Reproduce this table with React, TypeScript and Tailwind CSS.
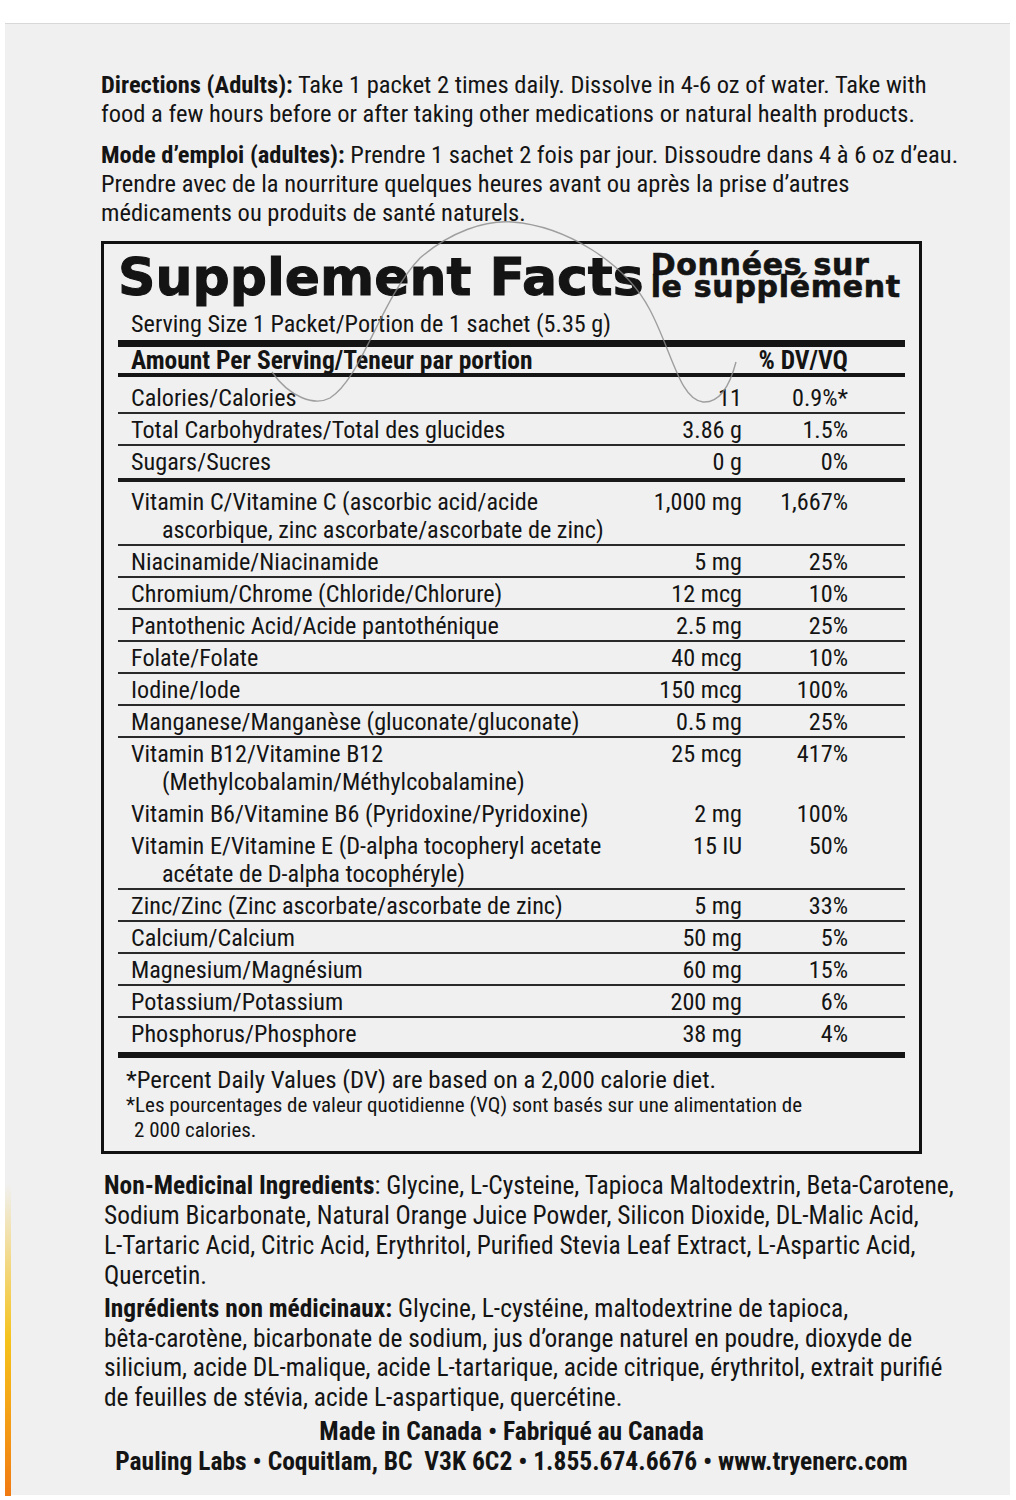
import React from 'react';

/* ── Supplement facts label (back of a carton) ── */

type Row = {
  name: string;
  name2?: string;
  amount: string;
  dv: string;
  rule?: 'thin' | 'thick' | 'none';
};

const ROWS: Row[] = [
  { name: 'Calories/Calories', amount: '11', dv: '0.9%*' },
  { name: 'Total Carbohydrates/Total des glucides', amount: '3.86 g', dv: '1.5%' },
  { name: 'Sugars/Sucres', amount: '0 g', dv: '0%', rule: 'thick' },
  {
    name: 'Vitamin C/Vitamine C (ascorbic acid/acide',
    name2: 'ascorbique, zinc ascorbate/ascorbate de zinc)',
    amount: '1,000 mg',
    dv: '1,667%',
  },
  { name: 'Niacinamide/Niacinamide', amount: '5 mg', dv: '25%' },
  { name: 'Chromium/Chrome (Chloride/Chlorure)', amount: '12 mcg', dv: '10%' },
  { name: 'Pantothenic Acid/Acide pantothénique', amount: '2.5 mg', dv: '25%' },
  { name: 'Folate/Folate', amount: '40 mcg', dv: '10%' },
  { name: 'Iodine/Iode', amount: '150 mcg', dv: '100%' },
  { name: 'Manganese/Manganèse (gluconate/gluconate)', amount: '0.5 mg', dv: '25%' },
  {
    name: 'Vitamin B12/Vitamine B12',
    name2: '(Methylcobalamin/Méthylcobalamine)',
    amount: '25 mcg',
    dv: '417%',
    rule: 'none',
  },
  { name: 'Vitamin B6/Vitamine B6 (Pyridoxine/Pyridoxine)', amount: '2 mg', dv: '100%', rule: 'none' },
  {
    name: 'Vitamin E/Vitamine E (D-alpha tocopheryl acetate',
    name2: 'acétate de D-alpha tocophéryle)',
    amount: '15 IU',
    dv: '50%',
  },
  { name: 'Zinc/Zinc (Zinc ascorbate/ascorbate de zinc)', amount: '5 mg', dv: '33%' },
  { name: 'Calcium/Calcium', amount: '50 mg', dv: '5%' },
  { name: 'Magnesium/Magnésium', amount: '60 mg', dv: '15%' },
  { name: 'Potassium/Potassium', amount: '200 mg', dv: '6%' },
  { name: 'Phosphorus/Phosphore', amount: '38 mg', dv: '4%', rule: 'none' },
];

// condensed Roboto stands in for Helvetica Condensed
const cond = "font-['Roboto',sans-serif] [font-stretch:75%]";
const black = "font-['DejaVu_Sans',sans-serif] [font-stretch:normal] font-bold";

function FactRow({ row, first, afterThick }: { row: Row; first: boolean; afterThick: boolean }) {
  const rule =
    row.rule === 'thick'
      ? 'border-b-4 border-[#1a1a1a] pb-[2px]'
      : row.rule === 'none'
        ? 'pb-[2px]'
        : 'border-b-2 border-[#2a2a2a]';
  const top = first ? 'pt-[7px]' : afterThick ? 'pt-[6px]' : 'pt-[2px]';
  return (
    <div className={`flex pl-[13px] pr-[57px] leading-[28px] ${top} ${rule}`}>
      <div className="flex-1 whitespace-nowrap">
        <div>{row.name}</div>
        {row.name2 && <div className="pl-[31px]">{row.name2}</div>}
      </div>
      <div className="w-[130px] text-right whitespace-nowrap">{row.amount}</div>
      <div className="w-[106px] text-right whitespace-nowrap">{row.dv}</div>
    </div>
  );
}

export default function App() {
  return (
    <div className={`relative w-[1016px] h-[1500px] overflow-hidden bg-white text-[#141414] ${cond}`}>
      <div className="relative mt-[23px] ml-[5px] mr-[6px] h-[1472px] bg-[#f0f0f0] border-t border-[#d8d8d8] pl-[96px] pr-[10px] pt-[46px]">
        {/* ── Directions ── */}
        <div className="text-[24.5px] leading-[29px] whitespace-nowrap">
          <p>
            <b>Directions (Adults):</b> Take 1 packet 2 times daily. Dissolve in 4-6 oz of water. Take with
            <br />
            food a few hours before or after taking other medications or natural health products.
          </p>
          <p className="mt-[12px]">
            <b>Mode d’emploi (adultes):</b> Prendre 1 sachet 2 fois par jour. Dissoudre dans 4 à 6 oz d’eau.
            <br />
            Prendre avec de la nourriture quelques heures avant ou après la prise d’autres
            <br />
            médicaments ou produits de santé naturels.
          </p>
        </div>

        {/* ── Facts panel ── */}
        <div className="mt-[14px] w-[821px] border-[3px] border-[#111] px-[14px] pb-[8px] text-[24.2px]">
          <div className="flex items-start pt-[8px] whitespace-nowrap">
            <h1 className={`${black} text-[52px] leading-[50px] [-webkit-text-stroke:1px_#111]`}>
              Supplement Facts
            </h1>
            <div className={`${black} ml-[7px] mt-[2px] text-[30px] leading-[22px] tracking-[0.7px] [-webkit-text-stroke:0.6px_#111]`}>
              Données sur
              <br />
              le supplément
            </div>
          </div>
          <div className="pl-[13px] leading-[28px] mt-[8px] whitespace-nowrap">
            Serving Size 1 Packet/Portion de 1 sachet (5.35 g)
          </div>
          <div className="h-[7px] bg-[#151515] mt-[2px]" />
          <div className="flex pl-[13px] pr-[57px] font-bold text-[25.5px] leading-[26px] whitespace-nowrap">
            <div className="flex-1">Amount Per Serving/Teneur par portion</div>
            <div className="w-[106px] text-right">% DV/VQ</div>
          </div>
          <div className="h-[4px] bg-[#151515]" />
          {ROWS.map((r, i) => (
            <FactRow key={r.name} row={r} first={i === 0} afterThick={i > 0 && ROWS[i - 1].rule === 'thick'} />
          ))}
          <div className="h-[6px] bg-[#151515] mt-[2px]" />
          <div className="pl-[8px] pt-[8px] whitespace-nowrap">
            <div className="text-[24.8px] leading-[27px]">*Percent Daily Values (DV) are based on a 2,000 calorie diet.</div>
            <div className="text-[21px] leading-[25px]">
              *Les pourcentages de valeur quotidienne (VQ) sont basés sur une alimentation de
            </div>
            <div className="pl-[8px] text-[21px] leading-[25px]">2 000 calories.</div>
          </div>
        </div>

        {/* ── Ingredients ── */}
        <div className="mt-[17px] ml-[3px] text-[25.4px] leading-[29.9px] whitespace-nowrap">
          <p>
            <b>Non-Medicinal Ingredients</b>: Glycine, L-Cysteine, Tapioca Maltodextrin, Beta-Carotene,
            <br />
            Sodium Bicarbonate, Natural Orange Juice Powder, Silicon Dioxide, DL-Malic Acid,
            <br />
            L-Tartaric Acid, Citric Acid, Erythritol, Purified Stevia Leaf Extract, L-Aspartic Acid,
            <br />
            Quercetin.
          </p>
          <p className="mt-[3px]">
            <b>Ingrédients non médicinaux:</b> Glycine, L-cystéine, maltodextrine de tapioca,
            <br />
            bêta-carotène, bicarbonate de sodium, jus d’orange naturel en poudre, dioxyde de
            <br />
            silicium, acide DL-malique, acide L-tartarique, acide citrique, érythritol, extrait purifié
            <br />
            de feuilles de stévia, acide L-aspartique, quercétine.
          </p>
        </div>

        {/* ── Maker ── */}
        <div className="mt-[3px] w-[821px] text-center font-bold text-[25.5px] leading-[30px] whitespace-pre">
          <div>Made in Canada • Fabriqué au Canada</div>
          <div>Pauling Labs • Coquitlam, BC  V3K 6C2 • 1.855.674.6676 • www.tryenerc.com</div>
        </div>

        {/* orange tint along the carton's folded edge */}
        <div className="absolute left-0 top-[1160px] w-[6px] h-[312px] bg-gradient-to-b from-transparent via-[#f5c21b] to-[#f07a12]" />
      </div>

      {/* plastic loop lying over the label */}
      <svg className="absolute left-0 top-0 pointer-events-none" width="1016" height="500">
        <path
          d="M272 372 C 290 398 315 406 330 398 C 362 378 380 300 420 258 C 450 232 485 220 512 222 C 565 226 625 262 650 310 C 672 352 680 400 703 402 C 720 403 730 385 736 362"
          fill="none"
          stroke="#8a8a8a"
          strokeWidth="1.4"
          opacity="0.8"
        />
      </svg>
    </div>
  );
}
